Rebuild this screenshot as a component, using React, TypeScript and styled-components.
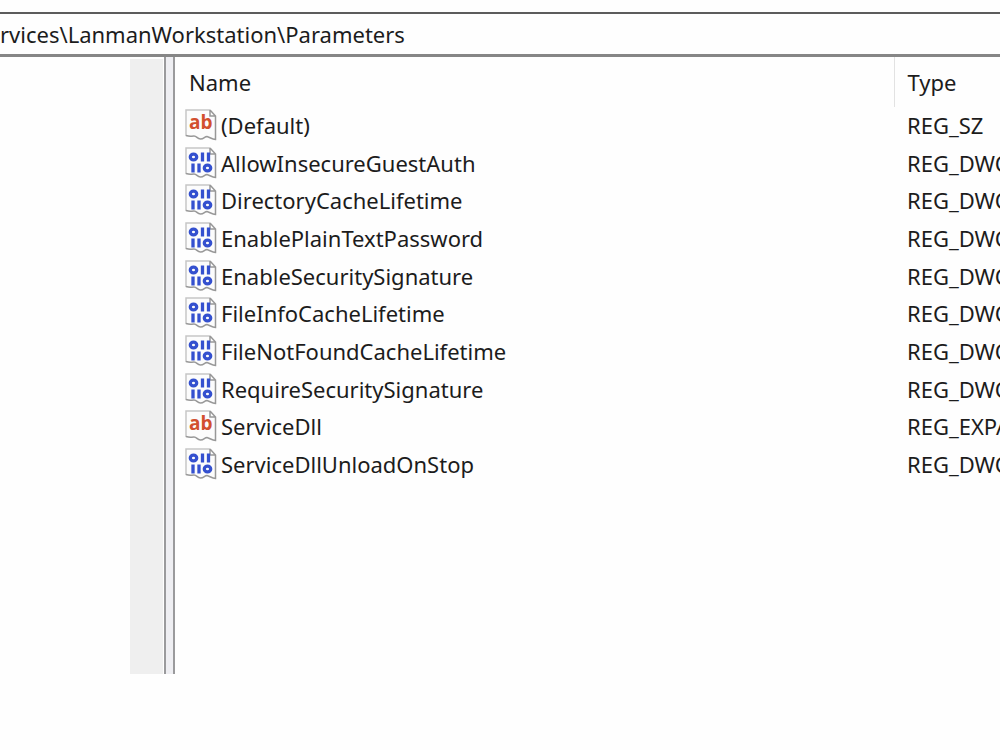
import React from "react";
import styled, { createGlobalStyle } from "styled-components";

const GlobalStyle = createGlobalStyle`
  *, *::before, *::after { box-sizing: border-box; }
  body {
    margin: 0;
    background: #fefefe;
    color: #1c1c1c;
    font-family: "Noto Sans", "Open Sans", sans-serif;
    font-size: 22px;
    line-height: 30px;
  }
`;

const Window = styled.div`
  display: flex;
  flex-direction: column;
  min-height: 100vh;
  padding: 12px 0 76px;
`;

const AddressBar = styled.input`
  flex: none;
  width: 100%;
  height: 45px;
  padding: 0;
  border: 0;
  border-top: 2px solid #5c5c5c;
  border-bottom: 3px solid #868686;
  background: #fefefe;
  color: inherit;
  font: inherit;
  outline: none;
`;

const Panes = styled.div`
  display: flex;
  flex: 1;
`;

const TreePane = styled.nav`
  display: flex;
  justify-content: flex-end;
  flex: none;
  width: 164px;
  padding: 2px 1px 0 0;
`;

const ScrollTrack = styled.div`
  width: 33px;
  background: #efefef;
`;

const Splitter = styled.div`
  flex: none;
  width: 11px;
  border: solid #9a9a9c;
  border-width: 0 2px;
  background: #eeeef2;
`;

const ValuesPane = styled.main`
  flex: 1;
  min-width: 0;
  overflow: hidden;
`;

const ValuesTable = styled.table`
  width: 100%;
  height: 427px;
  border-collapse: collapse;
  table-layout: fixed;
`;

const HeadCell = styled.th<{ $type?: boolean }>`
  height: 50px;
  width: ${(p) => (p.$type ? "106px" : "auto")};
  padding: 0 0 0 ${(p) => (p.$type ? "13px" : "14px")};
  border-left: ${(p) => (p.$type ? "1px solid #e2e2e2" : "0")};
  font-weight: 400;
  text-align: left;
`;

const Cell = styled.td<{ $type?: boolean }>`
  padding: 0 0 2px ${(p) => (p.$type ? "13px" : "10px")};
  white-space: nowrap;
`;

const ValueName = styled.span`
  display: flex;
  align-items: center;
  gap: 4px;
`;

const Icon = styled.svg`
  flex: none;
  width: 32px;
  height: 32px;
`;

function ValueIcon({ text }: { text: boolean }) {
  return (
    <Icon viewBox="0 0 32 32" aria-hidden="true">
      <path d="M1 1H25L30.500 7V30.500C27 30.500 24.500 28 22 27.500C19.500 27.500 19 30 15.500 30C12 30 12 27 9 27C6 27 5.500 28 1 26.500Z" fill="#fcfcfc" />
      <path d="M1 27V1H25" fill="none" stroke="#c6c6c6" strokeWidth="1.500" />
      <path d="M25 1L30.500 7V30.500C27 30.500 24.500 28 22 27.500C19.500 27.500 19 30 15.500 30C12 30 12 27 9 27C6 27 5.500 28 1 26.500M25 1V7H30.500" fill="none" stroke="#989898" strokeWidth="1.500" />
      {text ? (
        <text x="4" y="20" fontFamily="Open Sans" fontWeight="700" fontSize="19" fill="#d2502f">ab</text>
      ) : (
        <g fill="none" stroke="#3450cf" strokeWidth="3.300">
          <ellipse cx="8.500" cy="10" rx="3.200" ry="2.900" />
          <path d="M17.500 5.500V14.500M23.500 5.500V14.500M8 16.500V25.500M14 16.500V25.500" />
          <ellipse cx="22.500" cy="21" rx="3.200" ry="2.900" />
        </g>
      )}
    </Icon>
  );
}

const values = [
  ["(Default)", "REG_SZ"],
  ["AllowInsecureGuestAuth", "REG_DWORD"],
  ["DirectoryCacheLifetime", "REG_DWORD"],
  ["EnablePlainTextPassword", "REG_DWORD"],
  ["EnableSecuritySignature", "REG_DWORD"],
  ["FileInfoCacheLifetime", "REG_DWORD"],
  ["FileNotFoundCacheLifetime", "REG_DWORD"],
  ["RequireSecuritySignature", "REG_DWORD"],
  ["ServiceDll", "REG_EXPAND_SZ"],
  ["ServiceDllUnloadOnStop", "REG_DWORD"],
];

export default function App() {
  return (
    <Window>
      <GlobalStyle />
      <AddressBar aria-label="Address" defaultValue={"rvices\\LanmanWorkstation\\Parameters"} />
      <Panes>
        <TreePane aria-label="Registry keys">
          <ScrollTrack />
        </TreePane>
        <Splitter />
        <ValuesPane>
          <ValuesTable>
            <thead>
              <tr>
                <HeadCell scope="col">Name</HeadCell>
                <HeadCell scope="col" $type>Type</HeadCell>
              </tr>
            </thead>
            <tbody>
              {values.map(([name, type]) => (
                <tr key={name}>
                  <Cell>
                    <ValueName>
                      <ValueIcon text={type !== "REG_DWORD"} />
                      {name}
                    </ValueName>
                  </Cell>
                  <Cell $type>{type}</Cell>
                </tr>
              ))}
            </tbody>
          </ValuesTable>
        </ValuesPane>
      </Panes>
    </Window>
  );
}
